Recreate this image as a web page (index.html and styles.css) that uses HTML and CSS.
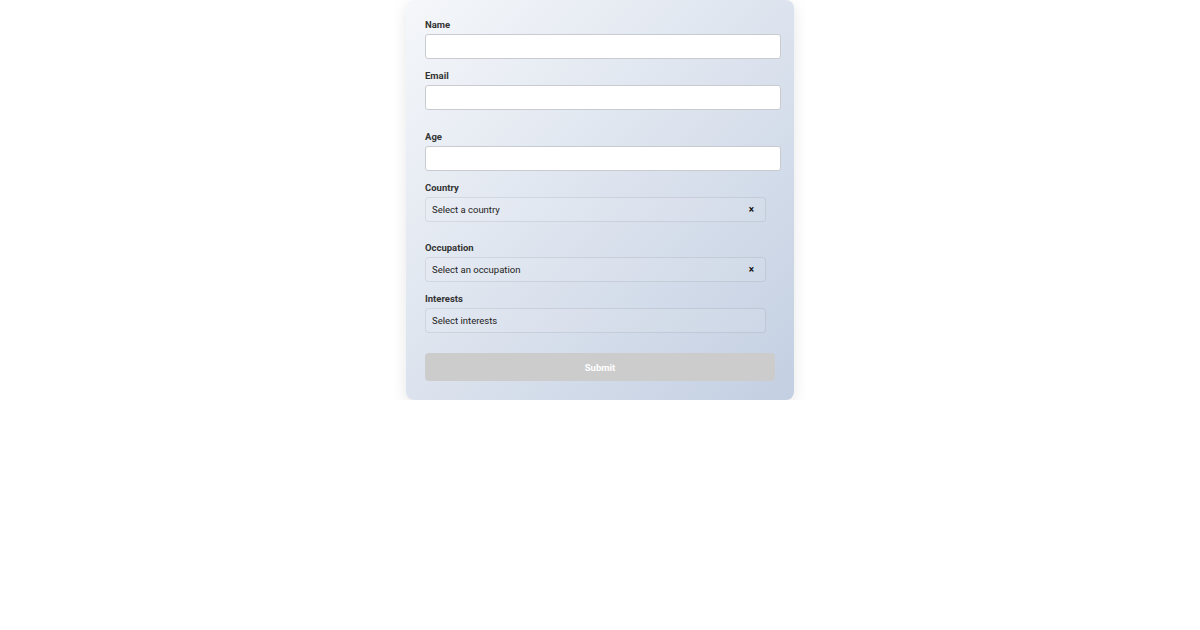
FILE: index.html
```html
<!DOCTYPE html>
<html>
<head>
<meta charset="utf-8">
<link rel="stylesheet" href="styles.css">
</head>
<body>
<form class="card">
  <div class="field">
    <label class="label">Name</label>
    <input class="input" type="text">
  </div>
  <div class="field field-spaced">
    <label class="label">Email</label>
    <input class="input" type="email">
  </div>
  <div class="field">
    <label class="label">Age</label>
    <input class="input" type="text">
  </div>
  <div class="field field-spaced">
    <label class="label">Country</label>
    <div class="select"><span>Select a country</span><span class="clear">×</span></div>
  </div>
  <div class="field">
    <label class="label">Occupation</label>
    <div class="select"><span>Select an occupation</span><span class="clear">×</span></div>
  </div>
  <div class="field">
    <label class="label">Interests</label>
    <div class="select"><span>Select interests</span></div>
  </div>
  <button class="submit" type="button">Submit</button>
</form>
</body>
</html>
```
FILE: styles.css
```css
html, body {
  margin: 0;
  padding: 0;
  background: #ffffff;
  font-family: Roboto, "Liberation Sans", sans-serif;
}
.card {
  width: 350px;
  margin: 0 auto;
  padding: 18px 19px 19px;
  border-radius: 8px;
  background: linear-gradient(135deg, #f5f7fa 0%, #c3cfe2 100%);
  box-shadow: 0 4px 15px rgba(0, 0, 0, 0.1);
  display: flex;
  flex-direction: column;
}
.field {
  display: flex;
  flex-direction: column;
  margin-bottom: 10px;
}
.field-spaced {
  margin-bottom: 19.5px;
}
.label {
  font-size: 9.5px;
  font-weight: 700;
  line-height: 13px;
  color: #333;
  margin-bottom: 3px;
}
.input {
  box-sizing: border-box;
  width: 356px;
  height: 25px;
  margin: 0;
  padding: 0 6px;
  border: 1px solid #c9cbd0;
  border-radius: 3px;
  background: #fff;
  font-family: inherit;
  font-size: 9.5px;
}
.select {
  box-sizing: border-box;
  width: 341px;
  height: 25px;
  padding: 0 11px 0 6px;
  border: 1px solid rgba(0, 0, 0, 0.08);
  border-radius: 4px;
  background: rgba(255, 255, 255, 0.08);
  display: flex;
  align-items: center;
  justify-content: space-between;
  font-size: 9.5px;
  color: #222;
}
.clear {
  font-size: 10px;
  font-weight: 700;
  color: #111;
}
.submit {
  margin-top: 10px;
  width: 350px;
  height: 28px;
  border: none;
  border-radius: 4px;
  background: #cccccc;
  color: #ffffff;
  font-family: inherit;
  font-size: 9.5px;
  font-weight: 700;
  padding: 0;
}
```
